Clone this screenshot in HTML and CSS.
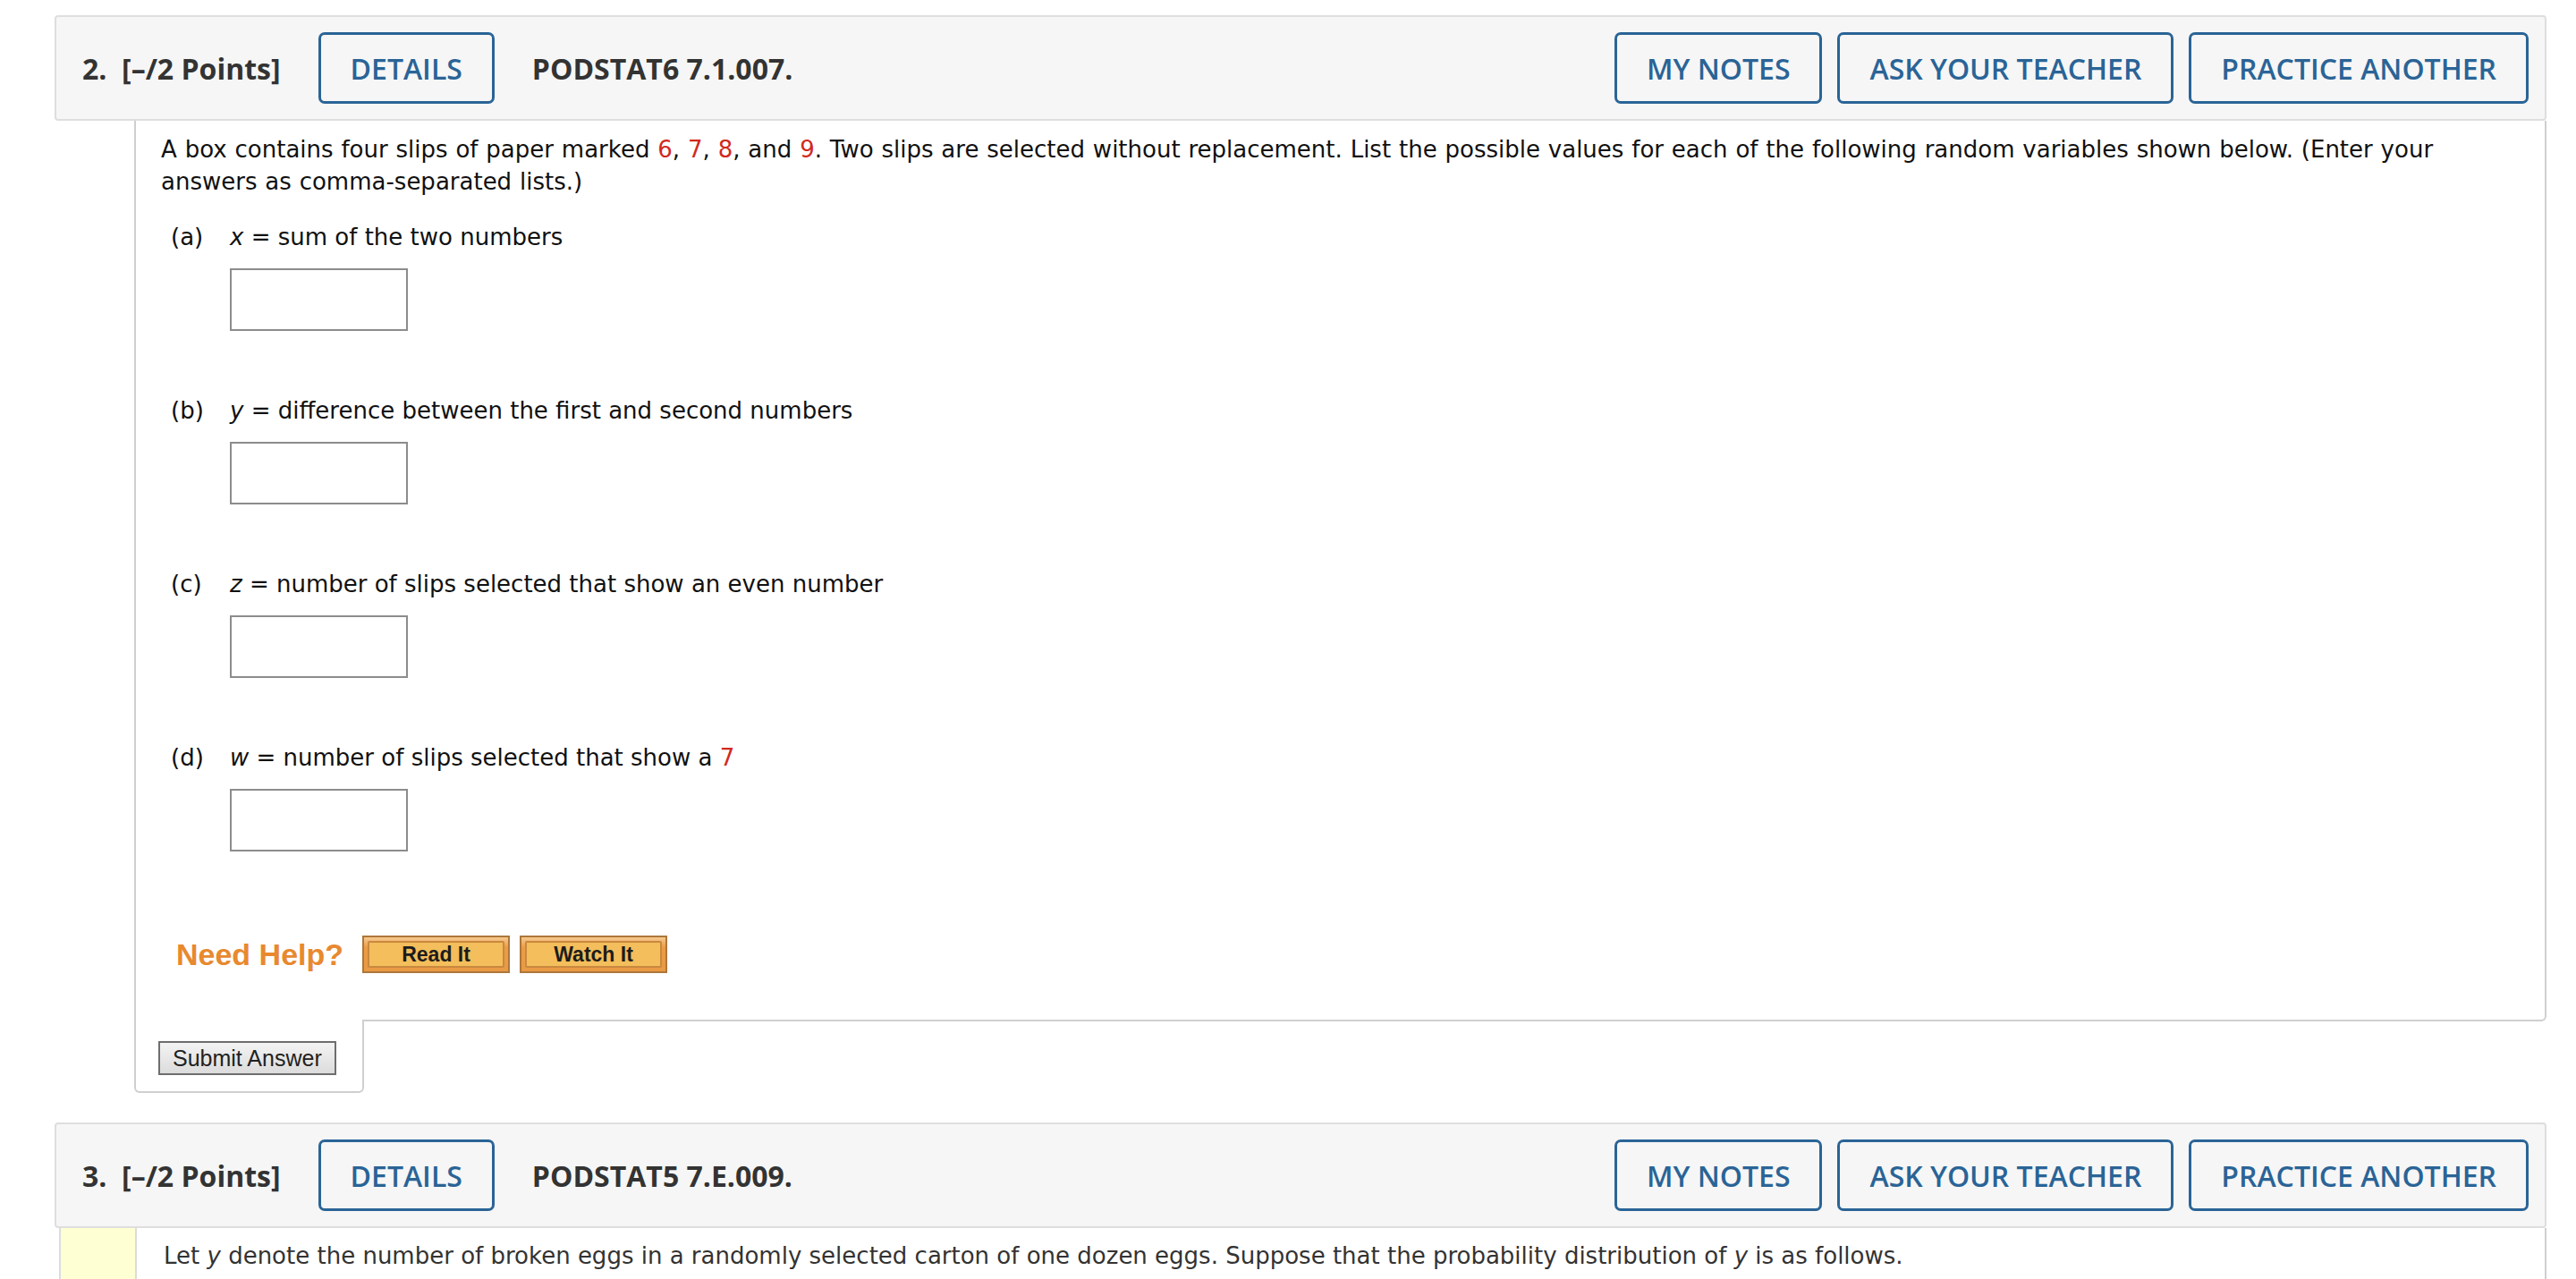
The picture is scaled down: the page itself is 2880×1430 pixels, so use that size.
FILE: index.html
```html
<!DOCTYPE html>
<html lang="en">
<head>
<meta charset="utf-8">
<title>Question</title>
<link rel="stylesheet" href="styles.css">
</head>
<body>
<div class="page">
  <section class="question">
    <div class="qhead">
      <span class="qnum">2.&nbsp; [–/2 Points]</span>
      <button class="hbtn">DETAILS</button>
      <span class="qcode">PODSTAT6 7.1.007.</span>
      <div class="hright">
        <button class="hbtn">MY NOTES</button>
        <button class="hbtn">ASK YOUR TEACHER</button>
        <button class="hbtn">PRACTICE ANOTHER</button>
      </div>
    </div>
    <div class="qbody">
      <p class="intro">A box contains four slips of paper marked <span class="red">6</span>, <span class="red">7</span>, <span class="red">8</span>, and <span class="red">9</span>. Two slips are selected without replacement. List the possible values for each of the following random variables shown below. (Enter your answers as comma-separated lists.)</p>
      <div class="parts">
        <div class="part">
          <span class="plabel">(a)</span>
          <div class="pcontent">
            <div class="ptext"><i>x</i> = sum of the two numbers</div>
            <input class="ans" type="text">
          </div>
        </div>
        <div class="part">
          <span class="plabel">(b)</span>
          <div class="pcontent">
            <div class="ptext"><i>y</i> = difference between the first and second numbers</div>
            <input class="ans" type="text">
          </div>
        </div>
        <div class="part">
          <span class="plabel">(c)</span>
          <div class="pcontent">
            <div class="ptext"><i>z</i> = number of slips selected that show an even number</div>
            <input class="ans" type="text">
          </div>
        </div>
        <div class="part">
          <span class="plabel">(d)</span>
          <div class="pcontent">
            <div class="ptext"><i>w</i> = number of slips selected that show a <span class="red">7</span></div>
            <input class="ans" type="text">
          </div>
        </div>
      </div>
      <div class="help">
        <span class="needhelp">Need Help?</span>
        <button class="hlpbtn"><span class="hlpin">Read It</span></button>
        <button class="hlpbtn"><span class="hlpin">Watch It</span></button>
      </div>
    </div>
    <div class="submit-tab">
      <button class="submit">Submit Answer</button>
    </div>
  </section>

  <section class="question q3">
    <div class="qhead">
      <span class="qnum">3.&nbsp; [–/2 Points]</span>
      <button class="hbtn">DETAILS</button>
      <span class="qcode">PODSTAT5 7.E.009.</span>
      <div class="hright">
        <button class="hbtn">MY NOTES</button>
        <button class="hbtn">ASK YOUR TEACHER</button>
        <button class="hbtn">PRACTICE ANOTHER</button>
      </div>
    </div>
    <div class="qbody3">
      <div class="strip"></div>
      <div class="q3content">
        <p class="intro3">Let <i>y</i> denote the number of broken eggs in a randomly selected carton of one dozen eggs. Suppose that the probability distribution of <i>y</i> is as follows.</p>
      </div>
    </div>
  </section>
</div>
</body>
</html>
```

FILE: styles.css
```css
html, body {
  margin: 0;
  padding: 0;
  background: #ffffff;
}

.page {
  padding-top: 17px;
  font-family: "DejaVu Sans", Verdana, sans-serif;
  color: #111;
}

.question {
  margin: 0 33px 0 61px;
}

.q3 {
  margin-top: 33px;
}

.qhead {
  box-sizing: border-box;
  height: 118px;
  background: #f6f6f6;
  border: 2px solid #dedede;
  border-radius: 4px;
  display: flex;
  align-items: center;
  padding: 0 18px 0 29px;
  font-family: "Open Sans", sans-serif;
}

.qnum {
  font-size: 32px;
  font-weight: 700;
  color: #333;
  white-space: nowrap;
}

.qcode {
  font-size: 32px;
  font-weight: 700;
  color: #333;
  margin-left: 42px;
  white-space: nowrap;
}

.hbtn {
  box-sizing: border-box;
  height: 80px;
  padding: 0 33px;
  background: transparent;
  border: 3px solid #2a6496;
  border-radius: 7px;
  color: #2a6496;
  font-family: "Open Sans", sans-serif;
  font-size: 32px;
  font-weight: 600;
  white-space: nowrap;
}

.qnum + .hbtn {
  margin-left: 42px;
}

.hright {
  margin-left: auto;
  display: flex;
  gap: 17px;
}

.qbody {
  margin-left: 89px;
  border: 2px solid #cfcfcf;
  border-top: none;
  border-radius: 0 0 6px 0;
  padding: 14px 28px 52px 28px;
  font-size: 26px;
  line-height: 36px;
}

.intro {
  margin: 0;
  padding-right: 60px;
  word-spacing: 0.6px;
}

.red {
  color: #d12a1e;
}

.parts {
  margin: 26px 0 0 11px;
}

.part {
  display: grid;
  grid-template-columns: 66px 1fr;
}

.part + .part {
  margin-top: 71px;
}

.ptext {
  line-height: 36px;
}

.ans {
  display: block;
  box-sizing: border-box;
  width: 199px;
  height: 70px;
  margin-top: 17px;
  padding: 0;
  border: 2px solid #8c8c8c;
  background: #fff;
}

.help {
  display: flex;
  align-items: center;
  margin-top: 94px;
}

.needhelp {
  font-family: "Liberation Sans", Arial, sans-serif;
  font-weight: 700;
  font-size: 34px;
  color: #e8892f;
  margin-left: 17px;
  margin-right: 21px;
  line-height: 42px;
}

.hlpbtn {
  box-sizing: border-box;
  width: 165px;
  height: 42px;
  padding: 4px;
  background: linear-gradient(#f6c98f 0%, #eb9c46 30%, #e99a44 100%);
  border: 2px solid #ad773b;
  display: flex;
}

.hlpbtn + .hlpbtn {
  margin-left: 11px;
}

.hlpin {
  flex: 1;
  display: flex;
  align-items: center;
  justify-content: center;
  background: #f3be5b;
  border: 2px solid #c9893f;
  border-radius: 2px;
  font-family: "Liberation Sans", Arial, sans-serif;
  font-weight: 700;
  font-size: 23px;
  color: #1c1c1c;
}

.submit-tab {
  box-sizing: border-box;
  width: 257px;
  margin: -2px 0 0 89px;
  background: #fff;
  border: 2px solid #cfcfcf;
  border-top: none;
  border-radius: 0 0 6px 6px;
  padding: 24px 0 18px 25px;
}

.submit {
  box-sizing: border-box;
  height: 38px;
  padding: 0 14px;
  background: linear-gradient(#f3f3f3, #dcdcdc);
  border: 2px solid #6e6e6e;
  font-family: "Liberation Sans", Arial, sans-serif;
  font-size: 25px;
  color: #222;
  display: block;
}

.qbody3 {
  margin-left: 5px;
  display: flex;
  border-left: 2px solid #dcdcdc;
  border-right: 2px solid #cfcfcf;
  min-height: 80px;
}

.strip {
  width: 83px;
  background: #ffffd4;
  border-right: 2px solid #dcdcdc;
}

.q3content {
  padding: 13px 0 0 30px;
  font-size: 26px;
  line-height: 36px;
  color: #333;
}

.intro3 {
  margin: 0;
}
```
